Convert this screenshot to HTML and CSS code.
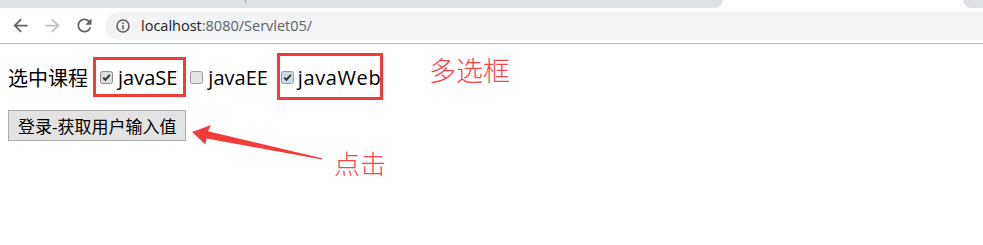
FILE: index.html
```html
<!DOCTYPE html>
<html lang="zh-CN">
<head>
<meta charset="utf-8">
<title>Servlet05</title>
<link rel="stylesheet" href="styles.css">
</head>
<body>
<div class="page">
  <div class="tabstrip">
    <div class="strip-left"><span class="sep"></span></div>
    <div class="tab"></div>
    <div class="strip-right"></div>
  </div>
  <div class="toolbar">
    <svg class="nav-icon" viewBox="0 0 24 24"><path fill="#5f6368" d="M20 11H7.83l5.59-5.59L12 4l-8 8 8 8 1.41-1.41L7.83 13H20v-2z"/></svg>
    <svg class="nav-icon" viewBox="0 0 24 24"><path fill="#bdc1c6" d="M4 11h12.17l-5.59-5.59L12 4l8 8-8 8-1.41-1.41L16.17 13H4v-2z"/></svg>
    <svg class="nav-icon" viewBox="0 0 24 24"><path fill="#5f6368" d="M17.65 6.35C16.2 4.9 14.21 4 12 4c-4.42 0-7.99 3.58-7.99 8s3.57 8 7.99 8c3.73 0 6.84-2.55 7.73-6h-2.08c-.82 2.33-3.04 4-5.65 4-3.31 0-6-2.69-6-6s2.69-6 6-6c1.66 0 3.14.69 4.22 1.78L13 11h7V4l-2.35 2.35z"/></svg>
    <div class="omnibox">
      <svg class="info-icon" viewBox="0 0 16 16"><circle cx="8" cy="8" r="6" fill="none" stroke="#5f6368" stroke-width="1.6"/><rect x="7.2" y="7" width="1.6" height="4.5" fill="#5f6368"/><rect x="7.2" y="4.4" width="1.6" height="1.6" fill="#5f6368"/></svg>
      <span class="url"><span class="host">localhost</span><span class="path">:8080/Servlet05/</span></span>
    </div>
  </div>

  <div class="content">
    <div class="row">
      <span class="label">选中课程</span>
      <span class="cb"><svg viewBox="0 0 13 13"><rect x="0.5" y="0.5" width="12" height="12" rx="2" fill="#dcdcdc" stroke="#8e8e8e"/><path d="M3.2 6.6 L5.4 8.8 L9.8 3.8" fill="none" stroke="#333" stroke-width="2"/></svg></span>
      <span class="opt">javaSE</span>
      <span class="cb"><svg viewBox="0 0 13 13"><rect x="0.5" y="0.5" width="12" height="12" rx="2" fill="#e4e4e4" stroke="#9a9a9a"/></svg></span>
      <span class="opt">javaEE</span>
      <span class="cb"><svg viewBox="0 0 13 13"><rect x="0.5" y="0.5" width="12" height="12" rx="2" fill="#d8d8d8" stroke="#6ea3e0"/><rect x="1.5" y="1.5" width="10" height="10" rx="1.5" fill="none" stroke="#c4daf3"/><path d="M3.2 6.6 L5.4 8.8 L9.8 3.8" fill="none" stroke="#333" stroke-width="2"/></svg></span>
      <span class="opt opt-last">javaWeb</span>
    </div>
    <button class="submit" type="button">登录-获取用户输入值</button>
  </div>

  <div class="mark mark-se"></div>
  <div class="mark mark-web"></div>
  <div class="note note-multi">多选框</div>
  <div class="note note-click">点击</div>
  <svg class="arrow" viewBox="0 0 983 245"><polygon fill="#f23b3b" points="192,132 211,125 208,131.3 322,158.3 322,159.6 206.5,138.5 205.5,144.5"/></svg>
</div>
</body>
</html>
```

FILE: styles.css
```css
* { box-sizing: border-box; }
html, body { margin: 0; padding: 0; background: #fff; }
body { width: 983px; height: 245px; overflow: hidden; }

.page { position: relative; width: 983px; height: 245px; }

.tabstrip { display: flex; height: 8px; background: #fff; }
.strip-left { position: relative; width: 723px; background: #dee1e6; border-bottom-right-radius: 8px; }
.sep { position: absolute; left: 245px; top: 0; width: 1px; height: 3px; background: #9aa0a6; }
.tab { width: 240px; background: #fff; }
.strip-right { flex: 1; background: #dee1e6; border-bottom-left-radius: 8px; }

.toolbar {
  display: flex;
  align-items: center;
  height: 36px;
  padding-left: 10px;
  background: #fff;
  border-bottom: 1px solid #b6b6b6;
}
.nav-icon { width: 21px; height: 21px; margin-right: 11px; flex: none; }
.nav-icon:nth-child(3) { margin-right: 10px; }

.omnibox {
  display: flex;
  align-items: center;
  flex: 1;
  height: 28px;
  margin-right: -20px;
  padding-left: 10px;
  background: #f1f3f4;
  border-radius: 14px 0 0 14px;
}
.info-icon { width: 16px; height: 16px; margin-right: 10px; flex: none; }
.url { font-family: "Open Sans", "Noto Sans", sans-serif; font-size: 14.5px; }
.host { color: #202124; }
.path { color: #5f6368; }

.content {
  padding: 16px 8px 0 8px;
  font-family: "Open Sans", "Noto Sans CJK SC", sans-serif;
  color: #000;
}
.row { display: flex; align-items: center; height: 34px; font-size: 20px; }
.label { margin-right: 12px; }
.cb { display: flex; width: 13px; height: 13px; margin-top: 1px; }
.cb svg { width: 13px; height: 13px; display: block; }
.opt { margin-left: 5px; margin-right: 13px; }
.opt-last { margin-left: 4px; letter-spacing: 0.6px; }

.submit {
  display: block;
  margin-top: 16px;
  height: 31px;
  padding: 0 9px;
  font-family: "Open Sans", "Noto Sans CJK SC", sans-serif;
  font-size: 17px;
  color: #000;
  background: #e3e3e3;
  border: 1px solid #adadad;
  border-radius: 0;
}

.mark { position: absolute; border: 3px solid #f23b3b; }
.mark-se { left: 93px; top: 57px; width: 93px; height: 40px; }
.mark-web { left: 277px; top: 53px; width: 106px; height: 47px; }

.note {
  position: absolute;
  font-family: "Noto Sans CJK SC", sans-serif;
  line-height: 1;
  color: #f04848;
  font-weight: 300;
}
.note-multi { left: 429px; top: 56px; font-size: 27px; }
.note-click { left: 334px; top: 150px; font-size: 26px; }

.arrow { position: absolute; left: 0; top: 0; width: 983px; height: 245px; pointer-events: none; }
```
